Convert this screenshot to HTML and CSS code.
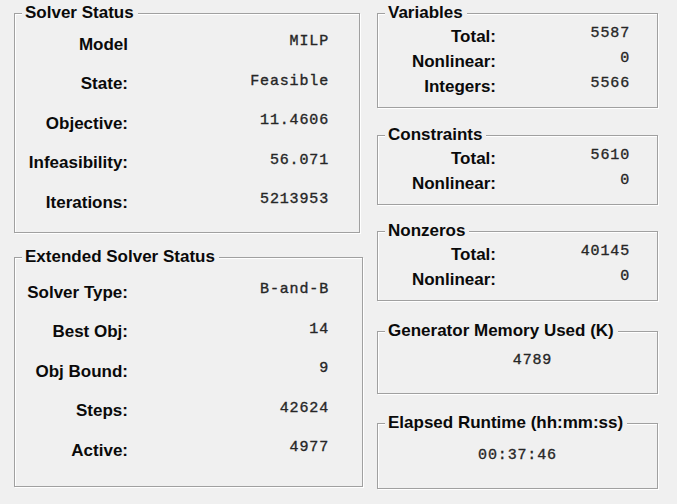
FILE: index.html
```html
<!DOCTYPE html>
<html>
<head>
<meta charset="utf-8">
<link rel="stylesheet" href="styles.css">
</head>
<body>
<div class="page">
  <div class="col col-left">
    <div class="group g-solver">
      <span class="title">Solver Status</span>
      <div class="row"><span class="lbl">Model</span><span class="val">MILP</span></div>
      <div class="row"><span class="lbl">State:</span><span class="val">Feasible</span></div>
      <div class="row"><span class="lbl">Objective:</span><span class="val">11.4606</span></div>
      <div class="row"><span class="lbl">Infeasibility:</span><span class="val">56.071</span></div>
      <div class="row"><span class="lbl">Iterations:</span><span class="val">5213953</span></div>
    </div>
    <div class="group g-ext">
      <span class="title">Extended Solver Status</span>
      <div class="row"><span class="lbl">Solver Type:</span><span class="val">B-and-B</span></div>
      <div class="row"><span class="lbl">Best Obj:</span><span class="val">14</span></div>
      <div class="row"><span class="lbl">Obj Bound:</span><span class="val">9</span></div>
      <div class="row"><span class="lbl">Steps:</span><span class="val">42624</span></div>
      <div class="row"><span class="lbl">Active:</span><span class="val">4977</span></div>
    </div>
  </div>
  <div class="col col-right">
    <div class="group small g-vars">
      <span class="title">Variables</span>
      <div class="srow"><span class="lbl">Total:</span><span class="val">5587</span></div>
      <div class="srow"><span class="lbl">Nonlinear:</span><span class="val">0</span></div>
      <div class="srow"><span class="lbl">Integers:</span><span class="val">5566</span></div>
    </div>
    <div class="group small g-cons">
      <span class="title">Constraints</span>
      <div class="srow"><span class="lbl">Total:</span><span class="val">5610</span></div>
      <div class="srow"><span class="lbl">Nonlinear:</span><span class="val">0</span></div>
    </div>
    <div class="group small g-nz">
      <span class="title">Nonzeros</span>
      <div class="srow"><span class="lbl">Total:</span><span class="val">40145</span></div>
      <div class="srow"><span class="lbl">Nonlinear:</span><span class="val">0</span></div>
    </div>
    <div class="group single g-mem">
      <span class="title">Generator Memory Used (K)</span>
      <span class="val">4789</span>
    </div>
    <div class="group single g-time">
      <span class="title">Elapsed Runtime (hh:mm:ss)</span>
      <span class="val">00:37:46</span>
    </div>
  </div>
</div>
</body>
</html>
```

FILE: styles.css
```css
html, body {
  margin: 0;
  padding: 0;
  background: #f0f0f0;
}

body {
  width: 677px;
  height: 504px;
  overflow: hidden;
  font-family: "Liberation Sans", Arial, sans-serif;
  color: #000;
}

.page {
  display: grid;
  grid-template-columns: 349px 281px;
  column-gap: 14px;
  padding: 13px 0 0 14px;
  align-items: start;
}

.col {
  display: flex;
  flex-direction: column;
  align-items: flex-start;
}

.group {
  position: relative;
  box-sizing: border-box;
  border: 1px solid #a0a0a0;
  box-shadow: inset 1px 1px 0 #ffffff, 1px 1px 0 #ffffff;
}

.title {
  position: absolute;
  top: -11px;
  left: 7px;
  padding: 0 4px 0 3px;
  background: #f0f0f0;
  font-size: 17px;
  font-weight: bold;
  line-height: 20px;
  white-space: nowrap;
  color: #0a0a0a;
}

.lbl {
  font-size: 17px;
  font-weight: bold;
  line-height: 20px;
  text-align: right;
  white-space: nowrap;
  color: #0a0a0a;
}

.val {
  font-family: "Liberation Mono", "Courier New", monospace;
  font-size: 15px;
  font-weight: normal;
  letter-spacing: 0.85px;
  line-height: 18px;
  color: #262626;
  white-space: nowrap;
  -webkit-text-stroke: 0.35px #262626;
}

/* left column big groups */
.g-solver {
  width: 346px;
  padding: 11px 0 9.5px 0;
}

.g-ext {
  width: 349px;
  margin-top: 24px;
  padding: 15px 0 15.5px 0;
}

.row {
  display: flex;
  align-items: center;
  width: 313px;
  height: 39.5px;
}

.row .lbl {
  width: 113px;
  flex: none;
}

.row .val,
.srow .val {
  flex: 1;
  text-align: right;
  margin-bottom: 5px;
  margin-right: -1px;
}

/* right column groups */
.small,
.single {
  width: 281px;
}

.small {
  padding: 10px 0 8px 0;
}

.srow {
  display: flex;
  align-items: center;
  width: 251px;
  height: 25px;
}

.srow .lbl {
  width: 118px;
  flex: none;
}

.g-cons {
  margin-top: 27px;
}

.g-nz {
  margin-top: 26px;
}

.single {
  display: flex;
  align-items: center;
  justify-content: center;
}

.g-mem {
  margin-top: 30px;
  height: 63px;
  padding-left: 30px;
}

.g-mem .val {
  margin-bottom: 3px;
}

.g-time {
  margin-top: 29px;
  height: 66px;
}

.g-time .val {
  margin-bottom: 1px;
}
```
